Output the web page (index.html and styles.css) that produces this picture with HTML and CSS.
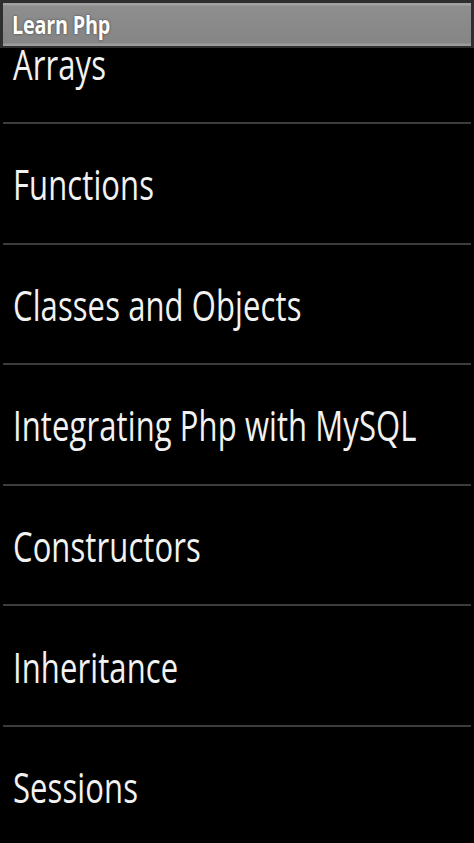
FILE: index.html
```html
<!DOCTYPE html>
<html>
<head>
<meta charset="utf-8">
<link rel="stylesheet" href="styles.css">
</head>
<body>
<div class="screen">
  <div class="titlebar">
    <div class="title"><span class="title-text">Learn Php</span></div>
  </div>
  <div class="viewport">
    <ul class="list">
      <li class="item"><span class="label">Arrays</span></li>
      <li class="item"><span class="label">Functions</span></li>
      <li class="item"><span class="label">Classes and Objects</span></li>
      <li class="item"><span class="label">Integrating Php with MySQL</span></li>
      <li class="item"><span class="label">Constructors</span></li>
      <li class="item"><span class="label">Inheritance</span></li>
      <li class="item"><span class="label">Sessions</span></li>
    </ul>
  </div>
</div>
</body>
</html>
```
FILE: styles.css
```css
* { box-sizing: border-box; }
html, body { margin: 0; padding: 0; background: #000; }
.screen {
  width: 474px;
  height: 843px;
  background: #000;
  overflow: hidden;
  display: flex;
  flex-direction: column;
  font-family: "Open Sans", "DejaVu Sans", sans-serif;
}
.titlebar {
  position: relative;
  z-index: 2;
  flex: 0 0 48px;
  background: #2e2e2e;
  padding: 3px 3px 2px 3px;
}
.title {
  height: 43px;
  background: linear-gradient(#a2a2a2 0, #a2a2a2 2px, #8e8e8e 3px, #858585 40px, #9c9c9c 41px, #9c9c9c 43px);
  display: flex;
  align-items: center;
  padding-left: 9px;
}
.title-text {
  display: inline-block;
  color: #fff;
  font-weight: 700;
  font-size: 19.8px;
  transform: scaleY(1.3);
  text-shadow: 0 0 2px rgba(0,0,0,0.6);
  letter-spacing: -0.2px;
}
.viewport {
  flex: 1 1 auto;
  overflow: hidden;
}
.list {
  list-style: none;
  margin: -44.6px 0 0 0;
  padding: 0;
}
.item {
  height: 120.6px;
  display: flex;
  align-items: center;
  padding: 0 0 2px 13px;
  position: relative;
}
.item::after {
  content: "";
  position: absolute;
  left: 3px;
  right: 3px;
  bottom: 0;
  height: 2px;
  background: #3c3c3c;
}
.label {
  display: inline-block;
  color: #f2f2f2;
  font-size: 31px;
  transform: scaleY(1.34) translateY(1px);
  letter-spacing: 0.1px;
}
```
